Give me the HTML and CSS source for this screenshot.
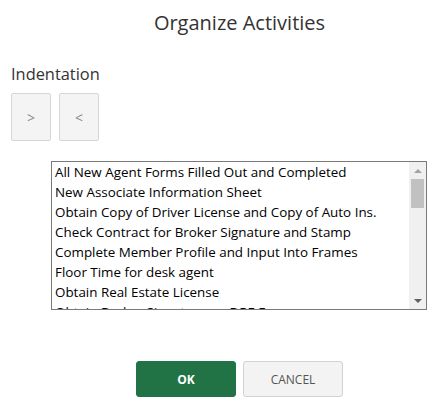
FILE: index.html
```html
<!DOCTYPE html>
<html>
<head>
<meta charset="utf-8">
<link rel="stylesheet" href="styles.css">
</head>
<body>
<div class="dialog">
  <h1 class="title">Organize Activities</h1>
  <div class="indent">
    <div class="indent-label">Indentation</div>
    <div class="indent-buttons">
      <button class="indent-btn">&gt;</button>
      <button class="indent-btn">&lt;</button>
    </div>
  </div>
  <div class="listbox">
    <ul class="items">
      <li>All New Agent Forms Filled Out and Completed</li>
      <li>New Associate Information Sheet</li>
      <li>Obtain Copy of Driver License and Copy of Auto Ins.</li>
      <li>Check Contract for Broker Signature and Stamp</li>
      <li>Complete Member Profile and Input Into Frames</li>
      <li>Floor Time for desk agent</li>
      <li>Obtain Real Estate License</li>
      <li>Obtain Broker Signature on DRE Form</li>
    </ul>
    <div class="scrollbar">
      <div class="arrow up"></div>
      <div class="track"><div class="thumb"></div></div>
      <div class="arrow down"></div>
    </div>
  </div>
  <div class="footer">
    <button class="btn ok">OK</button>
    <button class="btn cancel">CANCEL</button>
  </div>
</div>
</body>
</html>
```
FILE: styles.css
```css
html, body {
  margin: 0;
  padding: 0;
  background: #fff;
  overflow: hidden;
}
body {
  font-family: "Open Sans", "Noto Sans", sans-serif;
  color: #222;
}
.dialog {
  width: 439px;
  height: 406px;
}
.title {
  margin: 0;
  padding: 9px 0 0 40px;
  font-size: 20px;
  font-weight: 400;
  line-height: 28px;
  text-align: center;
  color: #333;
}
.indent {
  padding-left: 11px;
  margin-top: 26px;
}
.indent-label {
  font-size: 16.4px;
  line-height: 22px;
  color: #333;
}
.indent-buttons {
  display: flex;
  gap: 8px;
  margin-top: 8px;
}
.indent-btn {
  width: 40px;
  height: 48px;
  padding: 0;
  background: #f4f4f4;
  border: 1px solid #d6d6d6;
  border-radius: 2px;
  color: #8c8c8c;
  font-family: "Open Sans", sans-serif;
  font-size: 14px;
}
.listbox {
  display: flex;
  margin: 20px 0 0 51px;
  width: 376px;
  height: 149px;
  box-sizing: border-box;
  border: 1px solid #7a7a7a;
  overflow: hidden;
}
.items {
  flex: 1;
  margin: 0;
  padding: 0 0 0 3px;
  list-style: none;
  font-size: 13.4px;
  line-height: 20px;
  color: #000;
  white-space: nowrap;
  overflow: hidden;
}
.scrollbar {
  width: 17px;
  background: #f0f0f0;
  display: flex;
  flex-direction: column;
}
.arrow {
  height: 17px;
  display: flex;
  align-items: center;
  justify-content: center;
}
.arrow.up::before {
  content: "";
  border-left: 4px solid transparent;
  border-right: 4px solid transparent;
  border-bottom: 4px solid #a3a3a3;
}
.arrow.down::before {
  content: "";
  border-left: 4px solid transparent;
  border-right: 4px solid transparent;
  border-top: 4px solid #606060;
}
.track {
  flex: 1;
  padding: 0 2px;
}
.thumb {
  height: 29px;
  background: #c1c1c1;
}
.footer {
  display: flex;
  justify-content: center;
  gap: 7px;
  padding-left: 40px;
  margin-top: 51px;
}
.btn {
  width: 100px;
  height: 36px;
  border-radius: 3px;
  font-family: "Open Sans", sans-serif;
  font-size: 12px;
  padding: 0;
}
.ok {
  background: #217346;
  border: 1px solid #217346;
  color: #fff;
  font-weight: 700;
}
.cancel {
  background: #f3f3f3;
  border: 1px solid #d2d2d2;
  color: #555;
}
```
